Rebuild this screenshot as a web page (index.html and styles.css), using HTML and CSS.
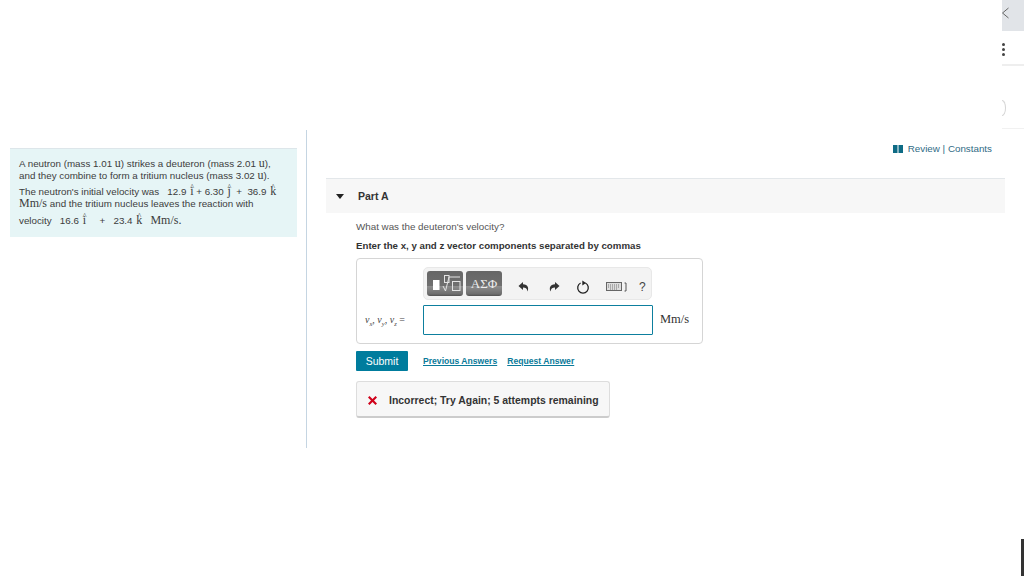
FILE: index.html
```html
<!DOCTYPE html>
<html lang="en">
<head>
<meta charset="utf-8">
<title>Part A</title>
<link rel="stylesheet" href="styles.css">
</head>
<body>
<div class="page">
  <aside class="passage">
    <div class="card">
      <p class="line l1">A neutron (mass 1.01 <span class="m">u</span>) strikes a deuteron (mass 2.01 <span class="m">u</span>),</p>
      <p class="line l2">and they combine to form a tritium nucleus (mass 3.02 <span class="m">u</span>).</p>
      <p class="line l3">The neutron's initial velocity was &nbsp; 12.9 <span class="m hat">i</span> + 6.30 <span class="m hat">j</span> &nbsp;+ &nbsp;36.9 <span class="m hat">k</span></p>
      <p class="line l4"><span class="m">Mm/s</span> and the tritium nucleus leaves the reaction with</p>
      <p class="line l5">velocity &nbsp;&nbsp;16.6 <span class="m hat">i</span> &nbsp; &nbsp; + &nbsp; 23.4 <span class="m hat">k</span> &nbsp; <span class="m">Mm/s.</span></p>
    </div>
  </aside>
  <main class="content">
    <div class="links">
      <svg class="book" width="10" height="8" viewBox="0 0 10 8" aria-hidden="true"><path d="M0 0h4.500v8H0zM5.500 0H10v8H5.500z"/></svg>
      <span>Review | Constants</span>
    </div>
    <div class="part-head">
      <svg class="caret" width="8" height="5" viewBox="0 0 8 5" aria-hidden="true"><path d="M0 0h8L4 5z"/></svg>
      <span>Part A</span>
    </div>
    <div class="part-body">
      <p class="question">What was the deuteron's velocity?</p>
      <p class="instruction">Enter the x, y and z vector components separated by commas</p>
      <div class="answer-box">
        <div class="toolbar">
          <div class="tool-btn tmpl">
            <svg width="36" height="25" viewBox="0 0 36 25" aria-hidden="true">
              <rect x="6" y="9" width="6.500" height="10" fill="#fff"/>
              <g fill="none" stroke="#e4e4e4" stroke-width="1">
                <rect x="17.500" y="4.500" width="4.500" height="7"/>
                <path d="M16 15l2.500 5 3.500-14h11"/>
                <rect x="25.500" y="10.500" width="7.500" height="9"/>
              </g>
            </svg>
          </div>
          <div class="tool-btn greek">ΑΣΦ</div>
          <div class="tools">
            <svg class="undo" width="12" height="12" viewBox="0 0 12 12" aria-hidden="true"><path d="M5 1L0.500 5 5 9V6.500c2.500 0 4 .8 4.500 4 1.500-3.500.6-7-4.500-7.300z"/></svg>
            <svg class="redo" width="12" height="12" viewBox="0 0 12 12" aria-hidden="true"><path d="M7 1l4.500 4L7 9V6.500c-2.500 0-4 .8-4.500 4C1 7 1.900 3.500 7 3.200z"/></svg>
            <svg class="reset" width="14" height="14" viewBox="0 0 14 14" aria-hidden="true"><path d="M4.600 3a5.300 5.300 0 1 0 4.800 0" fill="none" stroke="#222" stroke-width="1.300"/><path d="M6.300 .5v5L10 3z" fill="#222"/></svg>
            <svg class="kbd" width="21" height="10" viewBox="0 0 21 10" aria-hidden="true"><rect x=".5" y=".5" width="15" height="8" fill="#ddd" stroke="#666"/><path d="M2 3h12M2 5h12M4 7h8" stroke="#777" stroke-width="1" stroke-dasharray="1 1"/><path d="M18.500 1H20v8h-1.500" fill="none" stroke="#555"/></svg>
            <span class="help">?</span>
          </div>
        </div>
        <div class="input-row">
          <span class="vars"><i>v<sub>x</sub></i>, <i>v<sub>y</sub></i>, <i>v<sub>z</sub></i> <b>=</b></span>
          <div class="input"></div>
          <span class="unit">Mm/s</span>
        </div>
      </div>
      <div class="actions">
        <button class="submit">Submit</button>
        <a class="link">Previous Answers</a>
        <a class="link">Request Answer</a>
      </div>
      <div class="feedback">
        <svg width="11" height="11" viewBox="0 0 11 11" aria-hidden="true"><path d="M1 2.500L2.500 1 5.500 4 8.500 1 10 2.500 7 5.500 10 8.500 8.500 10 5.500 7 2.500 10 1 8.500 4 5.500z"/></svg>
        <span>Incorrect; Try Again; 5 attempts remaining</span>
      </div>
    </div>
  </main>
  <div class="rail">
    <div class="rail-close"><svg width="8" height="12" viewBox="0 0 8 12" aria-hidden="true"><path d="M6.500 1L.5 6l6 5" fill="none" stroke="#666" stroke-width="1"/></svg></div>
    <div class="rail-dots"><i></i><i></i><i></i></div>
    <div class="rail-arc"></div>
  </div>
  <div class="scroll-thumb"></div>
</div>
</body>
</html>
```
FILE: styles.css
```css
* { box-sizing: border-box; }
html, body { margin: 0; padding: 0; background: #fff; }
body { font-family: "Liberation Sans", Arial, sans-serif; color: #333; }
p { margin: 0; }
.page { position: relative; width: 1024px; height: 576px; overflow: hidden; display: flex; align-items: flex-start; padding-top: 130px; }

.passage { width: 307px; height: 318px; border-right: 1px solid #c5d5e2; padding: 18px 9px 0 10px; flex: none; }
.card { height: 89px; background: #e6f5f6; border-top: 1px solid #dde6ea; padding: 8px 0 0 9px; font-size: 9.8px; color: #3c3c3c; }
.line { white-space: nowrap; }
.l1 { height: 12px; line-height: 13px; }
.l2 { height: 13px; line-height: 13px; }
.l3 { height: 15px; line-height: 18px; padding-top: 1px; }
.l4 { height: 14px; line-height: 13px; }
.l5 { height: 18px; line-height: 20px; }
.m { font-family: "Liberation Serif", serif; font-size: 12px; line-height: 1; }
.hat { position: relative; margin-left: 1px; }
.hat::before { content: "^"; position: absolute; left: 0; right: 0; top: 0; text-align: center; font-size: 8px; line-height: 1; }

.content { width: 698px; flex: none; padding-left: 19px; }
.links { height: 48px; padding-top: 12px; padding-right: 13px; display: flex; justify-content: flex-end; align-items: flex-start; gap: 5px; font-size: 9.8px; line-height: 13px; color: #2f6b85; }
.book { margin-top: 3px; fill: #0e6b85; }
.part-head { height: 35px; background: #f7f7f7; border-top: 1px solid #e3e7ea; display: flex; align-items: center; padding-left: 10px; gap: 14px; font-size: 10.5px; font-weight: bold; color: #333; }
.caret { fill: #222; }
.part-body { padding-left: 30px; }
.question { font-size: 9.8px; line-height: 13px; padding-top: 7px; color: #555; }
.instruction { font-size: 9.7px; font-weight: bold; line-height: 13px; padding-top: 6px; color: #333; }

.answer-box { width: 347px; height: 86px; margin-top: 6px; border: 1px solid #d5d5d5; border-radius: 4px; padding: 8px 0 0 0; }
.toolbar { width: 229px; height: 33px; margin-left: 66px; background: #f3f3f3; border: 1px solid #e8e8e8; border-radius: 5px; display: flex; align-items: center; padding: 0 3px; gap: 3px; }
.tool-btn { height: 25px; border-radius: 3px; background: linear-gradient(#666 0, #6f6f6f 58%, #8c8c8c 62%, #6e6e6e 92%, #4f4f4f 100%); color: #eee; display: flex; align-items: center; justify-content: center; flex: none; }
.tmpl { width: 36px; }
.greek { width: 36px; font-family: "Liberation Serif", serif; font-size: 13px; }
.tools { display: flex; align-items: center; flex: 1; padding: 6px 0 0 13px; }
.undo, .redo { fill: #333; flex: none; }
.redo { margin-left: 18px; }
.reset { flex: none; margin-left: 16px; }
.kbd { flex: none; margin-left: 16px; }
.help { font-size: 12px; color: #444; margin-left: 12px; }

.input-row { display: flex; align-items: center; margin-top: 5px; height: 30px; }
.vars { width: 66px; padding-left: 8px; font-family: "Liberation Serif", serif; font-size: 10px; line-height: 12px; color: #444; white-space: nowrap; }
.vars sub { font-size: 6.500px; line-height: 0; }
.vars b { font-weight: normal; }
.input { width: 230px; height: 30px; background: #fff; border: 1px solid #0d7f9e; border-radius: 1px; flex: none; }
.unit { padding-left: 7px; padding-bottom: 1px; font-family: "Liberation Serif", serif; font-size: 12.500px; color: #333; }

.actions { display: flex; align-items: center; gap: 10px; margin-top: 7px; }
.submit { width: 52px; height: 20px; border: 0; padding: 0; border-radius: 1px; background: #007c9d; color: #fff; font: 10.500px "Liberation Sans", Arial, sans-serif; margin-right: 5px; }
.link { font-size: 8.600px; color: #0a7a9a; text-decoration: underline; font-weight: bold; }

.feedback { width: 254px; height: 37px; margin-top: 10px; background: #f7f7f7; border: 1px solid #ddd; border-bottom: 2px solid #ccc; border-radius: 3px; display: flex; align-items: center; padding: 2px 0 0 10px; gap: 11px; font-size: 10.450px; font-weight: bold; color: #333; white-space: nowrap; }
.feedback svg { fill: #d0021b; flex: none; }

.rail { position: absolute; top: 0; left: 1002px; width: 22px; height: 129px; border-bottom: 1px solid #f1f1f1; }
.rail-close { height: 31px; background: #e1e4e8; padding-top: 7px; }
.rail-close svg { display: block; }
.rail-dots { height: 35px; padding-top: 12px; border-bottom: 2px solid #eee; display: flex; flex-direction: column; gap: 2px; }
.rail-dots i { display: block; width: 3px; height: 3px; border-radius: 50%; background: #444; }
.rail-arc { width: 4px; height: 16px; margin-top: 34px; border: 1px solid #d4d4d4; border-left: 0; border-radius: 0 100% 100% 0 / 0 50% 50% 0; }
.scroll-thumb { position: absolute; left: 1021px; top: 539px; width: 3px; height: 37px; background: #333; }
```
